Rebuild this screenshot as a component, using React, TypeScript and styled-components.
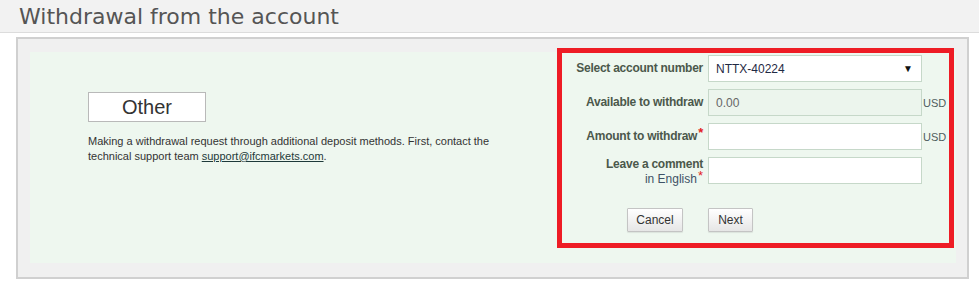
import React from 'react';
import styled, { createGlobalStyle } from 'styled-components';

const GlobalStyle = createGlobalStyle`
  html, body {
    margin: 0;
    padding: 0;
    background: #ffffff;
    font-family: "Liberation Sans", Arial, sans-serif;
  }
`;

const PageHeader = styled.header`
  height: 32px;
  background: #f2f2f2;
  border-bottom: 1px solid #dcdcdc;
  display: flex;
  align-items: center;
  padding-left: 19px;
`;

const Title = styled.h1`
  margin: 0;
  font-family: "DejaVu Sans", Verdana, sans-serif;
  font-weight: normal;
  font-size: 22px;
  color: #555555;
`;

const Panel = styled.section`
  margin: 4px 10px 0 16px;
  border: 2px solid #d0d0d0;
  background: #f0f0f0;
  padding: 13px 11px 14px 12px;
`;

const GreenArea = styled.div`
  background: #eef7ef;
  height: 211px;
  display: flex;
  justify-content: space-between;
  align-items: flex-start;
`;

const MethodColumn = styled.div`
  padding: 40px 0 0 58px;
  width: 420px;
`;

const MethodBadge = styled.div`
  width: 116px;
  height: 28px;
  background: #ffffff;
  border: 1px solid #b9b9b9;
  display: flex;
  align-items: center;
  justify-content: center;
  font-size: 20px;
  color: #333333;
`;

const Description = styled.p`
  margin: 12px 0 0;
  font-size: 11px;
  line-height: 15px;
  color: #333333;

  a {
    color: #1e3a3a;
    text-decoration: underline;
  }
`;

const FormBox = styled.form`
  margin: -4px 2px 0 0;
  width: 387px;
  height: 188px;
  border: 5px solid #ee1c25;
  padding-top: 2px;
  box-sizing: content-box;
  display: grid;
  grid-template-columns: 146px 214px 27px;
  grid-auto-rows: min-content;
  align-content: start;
`;

const Label = styled.label<{ $top?: boolean }>`
  height: 27px;
  display: flex;
  flex-direction: column;
  align-items: flex-end;
  justify-content: ${(p) => (p.$top ? 'flex-start' : 'center')};
  padding-right: 5px;
  font-size: 12px;
  line-height: 15px;
  letter-spacing: -0.25px;
  font-weight: bold;
  color: #4b584b;
  text-align: right;
  white-space: nowrap;
`;

const SubLabel = styled.span`
  font-weight: normal;
  letter-spacing: 0;
  color: #3e5266;
`;

const Star = styled.span`
  color: #e32222;
  font-size: 13px;
  line-height: 1;
  position: relative;
  top: -3px;
  margin-left: 1px;
`;

const FieldBox = styled.div<{ $muted?: boolean }>`
  height: 27px;
  box-sizing: border-box;
  border: 1px solid #c6d8c9;
  background: ${(p) => (p.$muted ? '#ecf5ed' : '#ffffff')};
  display: flex;
  align-items: center;
  justify-content: space-between;
  padding: 0 8px 0 7px;
  font-size: 12px;
  color: ${(p) => (p.$muted ? '#666666' : '#1f2a44')};
`;

const Arrow = styled.span`
  font-size: 10px;
  color: #111111;
`;

const Unit = styled.span`
  display: flex;
  align-items: center;
  padding-left: 1px;
  font-size: 11px;
  color: #4e5e5e;
`;

const RowGap = styled.div<{ $h: number }>`
  grid-column: 1 / -1;
  height: ${(p) => p.$h}px;
`;

const ButtonCell = styled.div<{ $end?: boolean }>`
  display: flex;
  justify-content: ${(p) => (p.$end ? 'flex-end' : 'flex-start')};
  padding-right: ${(p) => (p.$end ? '25px' : '0')};
`;

const Button = styled.button<{ $w: number }>`
  width: ${(p) => p.$w}px;
  height: 24px;
  border: 1px solid #c4c4c4;
  border-radius: 1px;
  background: linear-gradient(#ffffff, #e6e6e6);
  box-shadow: 0 1px 1px rgba(0, 0, 0, 0.08);
  font-family: "Liberation Sans", Arial, sans-serif;
  font-size: 12px;
  color: #333333;
  padding: 0;
`;

export default function App() {
  return (
    <>
      <GlobalStyle />
      <PageHeader>
        <Title>Withdrawal from the account</Title>
      </PageHeader>
      <Panel>
        <GreenArea>
          <MethodColumn>
            <MethodBadge>Other</MethodBadge>
            <Description>
              Making a withdrawal request through additional deposit methods. First, contact the
              technical support team <a href="#">support@ifcmarkets.com</a>.
            </Description>
          </MethodColumn>
          <FormBox onSubmit={(e) => e.preventDefault()}>
            <Label>Select account number</Label>
            <FieldBox>
              <span>NTTX-40224</span>
              <Arrow>▼</Arrow>
            </FieldBox>
            <Unit />
            <RowGap $h={7} />

            <Label>Available to withdraw</Label>
            <FieldBox $muted>
              <span>0.00</span>
            </FieldBox>
            <Unit>USD</Unit>
            <RowGap $h={7} />

            <Label>
              <span>
                Amount to withdraw<Star>*</Star>
              </span>
            </Label>
            <FieldBox />
            <Unit>USD</Unit>
            <RowGap $h={7} />

            <Label $top>
              <span>Leave a comment</span>
              <SubLabel>
                in English<Star>*</Star>
              </SubLabel>
            </Label>
            <FieldBox />
            <Unit />
            <RowGap $h={24} />

            <ButtonCell $end>
              <Button type="button" $w={56}>Cancel</Button>
            </ButtonCell>
            <ButtonCell>
              <Button type="submit" $w={45}>Next</Button>
            </ButtonCell>
          </FormBox>
        </GreenArea>
      </Panel>
    </>
  );
}
